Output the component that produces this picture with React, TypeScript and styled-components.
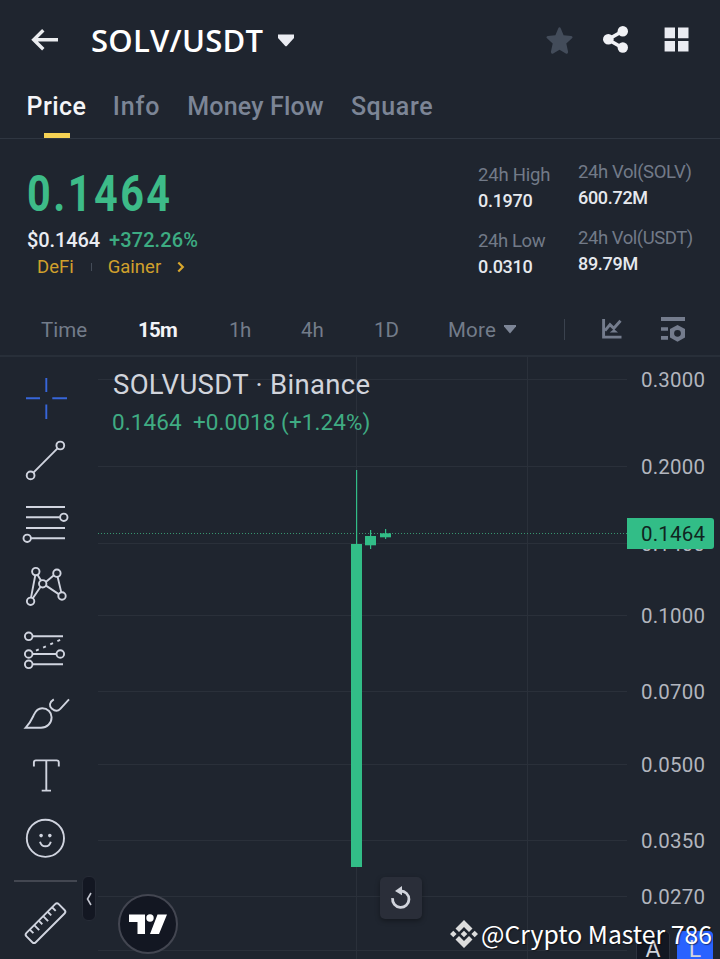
import React from "react";
import styled, { createGlobalStyle } from "styled-components";

const Global = createGlobalStyle`
  * { box-sizing: border-box; }
  html, body { margin: 0; background: #1f252f; }
  body { overflow: hidden; }
`;

const Screen = styled.main`
  width: 720px;
  height: 959px;
  overflow: hidden;
  position: relative;
  display: flex;
  flex-direction: column;
  background: #1f252f;
  color: #eaecef;
  font-family: Roboto, sans-serif;
`;

const Header = styled.header`
  height: 80px;
  flex: none;
  display: flex;
  align-items: center;
  padding: 0 25px 0 31px;
  svg { display: block; flex: none; }
`;

const Pair = styled.h1`
  margin: 0 14px 0 32px;
  width: 173px;
  white-space: nowrap;
  font: 600 31px/40px "Open Sans", sans-serif;
  letter-spacing: 0.25px;
  color: #fff;
`;

const HeaderActions = styled.div`
  margin-left: auto;
  display: flex;
  align-items: center;
  gap: 30px;
`;

const Tabs = styled.nav`
  height: 59px;
  flex: none;
  display: flex;
  gap: 27px;
  padding-left: 27px;
  border-bottom: 1px solid #2f3641;
`;

const Tab = styled.div<{ $active?: boolean; $w: number; $ls: number }>`
  width: ${(p) => p.$w}px;
  height: 58px;
  display: flex;
  flex-direction: column;
  align-items: center;
  justify-content: space-between;
  padding-top: 11px;
  white-space: nowrap;
  font-size: 25px;
  line-height: 32px;
  font-weight: 500;
  letter-spacing: ${(p) => p.$ls}px;
  color: ${(p) => (p.$active ? "#f4f5f8" : "#7c8596")};
  &::after {
    content: "";
    width: 26px;
    height: 5px;
    background: ${(p) => (p.$active ? "#f6d254" : "transparent")};
  }
`;

const Summary = styled.section`
  height: 164px;
  flex: none;
  display: flex;
  padding-left: 27px;
`;

const PriceBlock = styled.div`
  width: 451px;
  padding-top: 30px;
`;

const BigPrice = styled.div`
  height: 50px;
  width: 170px;
  font-size: 49.5px;
  line-height: 50px;
  font-weight: 700;
  letter-spacing: 3px;
  color: #3dbb88;
  transform: scaleX(0.835);
  transform-origin: 0 0;
  white-space: nowrap;
`;

const SubPrice = styled.div`
  display: flex;
  gap: 9px;
  margin-top: 9px;
  font-size: 20px;
  line-height: 24px;
  font-weight: 500;
  white-space: nowrap;
`;

const Fiat = styled.span`
  width: 73px;
  color: #eaecf2;
  letter-spacing: -0.1px;
`;

const Change = styled.span`
  color: #3dac82;
  letter-spacing: 0.1px;
`;

const Tags = styled.div`
  display: flex;
  align-items: center;
  padding-left: 10px;
  margin-top: 3px;
  font-size: 18.5px;
  line-height: 24px;
  color: #d0a02c;
  svg { margin-left: 16px; }
`;

const TagSplit = styled.i`
  width: 1px;
  height: 8px;
  margin: 0 16px 0 17px;
  background: #444c58;
`;

const Stats = styled.div<{ $w: number; $top: number }>`
  width: ${(p) => p.$w}px;
  padding-top: ${(p) => p.$top}px;
  display: flex;
  flex-direction: column;
  gap: 14px;
`;

const Stat = styled.div`
  height: 52px;
  white-space: nowrap;
`;

const StatLabel = styled.div<{ $ls: number }>`
  font-size: 18.5px;
  line-height: 26px;
  letter-spacing: ${(p) => p.$ls}px;
  color: #727a88;
`;

const StatValue = styled.div`
  font-size: 18px;
  line-height: 26px;
  font-weight: 500;
  letter-spacing: -0.3px;
  color: #e6e9ee;
`;

const Intervals = styled.div`
  height: 54px;
  flex: none;
  display: flex;
  align-items: center;
  padding: 0 0 0 41px;
  border-bottom: 2px solid #282f39;
  svg { display: block; flex: none; }
`;

const Interval = styled.span<{ $active?: boolean; $w: number; $ls?: number }>`
  width: ${(p) => p.$w}px;
  flex: none;
  white-space: nowrap;
  font-size: 20.5px;
  line-height: 26px;
  padding-top: 1px;
  letter-spacing: ${(p) => p.$ls ?? 0}px;
  font-weight: ${(p) => (p.$active ? 700 : 400)};
  color: ${(p) => (p.$active ? "#f3f4f7" : "#737c8a")};
`;

const BarSplit = styled.i`
  width: 1px;
  height: 21px;
  margin: 0 37px 0 48px;
  background: #3a424e;
`;

const ChartArea = styled.section`
  flex: 1;
  display: flex;
  min-height: 0;
  position: relative;
`;

const Toolbar = styled.aside`
  width: 98px;
  flex: none;
  padding-top: 9px;
  display: flex;
  flex-direction: column;
`;

const Tool = styled.div<{ $accent?: boolean }>`
  height: 63px;
  flex: none;
  padding-left: 22px;
  display: flex;
  align-items: center;
  svg {
    display: block;
    overflow: visible;
    fill: none;
    stroke: ${(p) => (p.$accent ? "#3766d9" : "#d0d4df")};
    stroke-width: 1.9;
  }
`;

const ToolSplit = styled.i`
  width: 63px;
  height: 2px;
  margin: 10px 0 9px 14px;
  flex: none;
  background: #434751;
`;

const Canvas = styled.svg`
  display: block;
  width: 622px;
  height: 602px;
  flex: none;
  font-family: Roboto, sans-serif;
`;

const Legend = styled.div`
  position: absolute;
  left: 113px;
  top: 11px;
  white-space: nowrap;
`;

const LegendTitle = styled.div`
  font-size: 27.5px;
  line-height: 34px;
  letter-spacing: 0.3px;
  color: #d1d4dc;
`;

const LegendValue = styled.div`
  margin: 5px 0 0 -1px;
  font-size: 22.5px;
  line-height: 30px;
  letter-spacing: 0.08px;
  color: #3fac83;
  white-space: pre;
`;

const Handle = styled.div`
  position: absolute;
  left: 82px;
  top: 519px;
  width: 14px;
  height: 45px;
  border-radius: 6px;
  border: 1px solid #262b36;
  background: #131722;
  display: grid;
  place-items: center;
`;

const Logo = styled.div`
  position: absolute;
  left: 118px;
  top: 537px;
  width: 60px;
  height: 60px;
  border-radius: 50%;
  border: 2px solid #434651;
  background: #131722;
  display: grid;
  place-items: center;
`;

const Reset = styled.div`
  position: absolute;
  left: 380px;
  top: 520px;
  width: 42px;
  height: 42px;
  border-radius: 5px;
  background: #2a2e39;
  box-shadow: 0 2px 5px rgba(0, 0, 0, 0.35);
  display: grid;
  place-items: center;
`;

const ScaleButton = styled.div<{ $on?: boolean; $left: number; $w: number }>`
  position: absolute;
  left: ${(p) => p.$left}px;
  top: 574px;
  width: ${(p) => p.$w}px;
  height: 40px;
  border-radius: 4px;
  border: 1px solid ${(p) => (p.$on ? "#2962ff" : "#2d323e")};
  background: ${(p) => (p.$on ? "#2962ff" : "#131722")};
  color: #d1d4dc;
  text-align: center;
  font-size: 23px;
  line-height: 36px;
`;

const Watermark = styled.div`
  position: absolute;
  left: 450px;
  bottom: 7px;
  display: flex;
  align-items: center;
  gap: 3px;
  white-space: nowrap;
  font: 400 24.75px/36px "Noto Sans CJK SC", sans-serif;
  color: #fff;
  text-shadow: 1px 1px 1px rgba(0, 0, 0, 0.5);
  svg { display: block; }
`;

const WatermarkText = styled.span`
  padding-bottom: 2px;
  line-height: 34px;
`;

const gridRows = [379.5, 466.5, 543.5, 615.5, 691.5, 764.5, 840.5, 896.5, 950.5];
const axis: [number, string][] = [
  [379.5, "0.3000"],
  [466.5, "0.2000"],
  [543.5, "0.1400"],
  [615.5, "0.1000"],
  [691.5, "0.0700"],
  [764.5, "0.0500"],
  [840.5, "0.0350"],
  [896.5, "0.0270"],
];
const candles = [
  { x: 351, top: 544, bottom: 867, high: 470, low: 867 },
  { x: 365, top: 536, bottom: 545.3, high: 530, low: 549 },
  { x: 380, top: 533.3, bottom: 537.3, high: 529, low: 539 },
];

const Icon = ({ children }: { children: React.ReactNode }) => (
  <svg width="48" height="48" viewBox="-24 -24 48 48">{children}</svg>
);

function ToolIcons() {
  return (
    <Toolbar>
      <Tool $accent>
        <Icon><path d="M.3-20V-6M.3 6.5V21M-20 .3H-6M6.3.3H21" /></Icon>
      </Tool>
      <Tool>
        <Icon>
          <circle cx="14.3" cy="-15.5" r="3.9" /><circle cx="-15.4" cy="14.4" r="3.9" />
          <path d="M11.5-12.7-12.6 11.6" />
        </Icon>
      </Tool>
      <Tool>
        <Icon>
          <path d="M-20-17H19M-20-6.7H13.8M-20 4H19M-15 14.3H19" />
          <circle cx="17.8" cy="-6.7" r="3.7" /><circle cx="-18.8" cy="14.3" r="3.7" />
        </Icon>
      </Tool>
      <Tool>
        <Icon>
          <circle cx="-10.2" cy="-15.4" r="3.7" /><circle cx="10.9" cy="-13.8" r="3.7" />
          <circle cx="-3.3" cy="-3.2" r="3.7" /><circle cx="-15.4" cy="14.3" r="3.7" />
          <circle cx="16" cy="9" r="3.7" />
          <path d="M-10.7-11.7-15 10.6M-8.4-12.1-5-6.4M-5.4-.2-13.2 11.3M-.2-5.1 7.8-11.7M11.6-10.1 15.3 5.4M0-1.4 12.7 7.1" />
        </Icon>
      </Tool>
      <Tool>
        <Icon>
          <path d="M-13.3-13.7H17M-13.3 4H10.4M-13.3 14.3H17" />
          <circle cx="-17.3" cy="-13.7" r="3.8" /><circle cx="-17.3" cy="4" r="3.8" />
          <circle cx="14.3" cy="4" r="3.8" /><circle cx="-17.3" cy="14.3" r="3.8" />
          <path d="M-10 .7 15-10.4" strokeDasharray="3 4.8" />
        </Icon>
      </Tool>
      <Tool>
        <Icon>
          <path d="M-20.3 14.7C-15.7 10-14 5.8-12.3 2.2-10.2-2.4-7.5-4.7-3.8-4.7 1.8-4.7 5.6-.6 5.6 4.2 5.6 10.2 1 14.7-5 14.7Z" />
          <path d="M7.8-13.6C3.2-10.8 2.8-7 6-4.2 9.2-1.4 12-1.7 14.3-4.2L23-13.6" />
        </Icon>
      </Tool>
      <Tool>
        <Icon><path d="M-12.1-9.6V-13.5Q-12.1-15.6-10-15.6H10.6Q12.8-15.6 12.8-13.5V-9.6M.3-15.6V14.6M-4.3 14.6H5" /></Icon>
      </Tool>
      <Tool>
        <Icon>
          <circle cx="-.6" cy="-.7" r="18.6" />
          <path d="M-6 2.7C-4.3 8.8 3.2 8.8 4.8 2.7" />
          <g fill="#d0d4df" stroke="none"><circle cx="-4.9" cy="-3.4" r="1.8" /><circle cx="3.8" cy="-3.4" r="1.8" /></g>
        </Icon>
      </Tool>
      <ToolSplit />
      <Tool>
        <Icon>
          <g transform="translate(-.5 .2) rotate(-45)">
            <rect x="-22.8" y="-6.6" width="45.6" height="13.2" rx="2.5" />
            <path d="M-15.6-6.6V-1.5M-9.3-6.6V.4M-3-6.6V-1.5M3.3-6.6V.4M9.6-6.6V-1.5M15.9-6.6V-1.5" />
          </g>
        </Icon>
      </Tool>
    </Toolbar>
  );
}

function PriceChart() {
  return (
    <Canvas viewBox="98 357 622 602">
      <g stroke="#2a303a" strokeWidth="1">
        {gridRows.map((y) => <line key={y} x1="98" x2="627" y1={y} y2={y} />)}
        <line x1="356.5" x2="356.5" y1="357" y2="959" />
        <line x1="527.5" x2="527.5" y1="357" y2="959" />
      </g>
      <line x1="98" x2="627" y1="533.5" y2="533.5" stroke="#37966f" strokeDasharray="1 2" />
      {candles.map((c) => (
        <g key={c.x} fill="#32bd87">
          <rect x={c.x + 5} y={c.high} width="1.2" height={c.low - c.high} />
          <rect x={c.x} y={c.top} width="11" height={c.bottom - c.top} />
        </g>
      ))}
      <g fill="#b2b5be" fontSize="20.5">
        {axis.map(([y, label]) => (
          <text key={label} x="641" y={y + 7.5} textLength="64">{label}</text>
        ))}
      </g>
      <path d="M627 518H711Q714 518 714 521V546Q714 549 711 549H627Z" fill="#32bd87" />
      <text x="641" y="541" fontSize="20.5" textLength="64" fill="#10251f">0.1464</text>
    </Canvas>
  );
}

export default function App() {
  return (
    <Screen>
      <Global />
      <Header>
        <svg width="28" height="24" viewBox="0 0 28 24" fill="none" stroke="#eaecef" strokeWidth="3.4">
          <path d="M12.3 2.3 2.7 11.8 12.3 21.3M3 11.8H27" />
        </svg>
        <Pair>SOLV/USDT</Pair>
        <svg width="16" height="13" viewBox="0 0 16 13" fill="#eaecf2">
          <path d="M0 .5H16V4L9 11.8Q8 12.8 7 11.8L0 4Z" />
        </svg>
        <HeaderActions>
          <svg width="27" height="27" viewBox="0 0 27 27" fill="#434c5a">
            <path d="M13.5.2Q14.3.2 14.8 1.5L17.6 8.2 25.2 9Q27.4 9.6 26 11.3L20.3 16.4 22.1 24.8Q22.1 27.4 19.8 26.5L13.5 22.8 7.2 26.5Q4.9 27.4 4.9 24.8L6.7 16.4 1 11.3Q-.4 9.6 1.8 9L9.4 8.2 12.2 1.5Q12.7.2 13.5.2Z" />
          </svg>
          <svg width="26" height="28" viewBox="1 .5 26 28" fill="#f0f1f5">
            <path d="M20 6 6 14 20 22" fill="none" stroke="#f0f1f5" strokeWidth="3.7" />
            <circle cx="6.3" cy="13.8" r="5.3" /><circle cx="20.8" cy="5.8" r="5.2" /><circle cx="20.8" cy="22" r="5.2" />
          </svg>
          <svg width="36" height="26" viewBox="0 0 36 26" fill="#eaecf2">
            <path d="M5.6 .6H16V11.2H5.6ZM19 .6H29.5V11.2H19ZM5.6 14.1H16V24.6H5.6ZM19 14.1H29.5V24.6H19Z" />
          </svg>
        </HeaderActions>
      </Header>
      <Tabs>
        <Tab $active $w={59} $ls={0.45}>Price</Tab>
        <Tab $w={47} $ls={0.9}>Info</Tab>
        <Tab $w={137} $ls={0.2}>Money Flow</Tab>
        <Tab $w={82} $ls={0.6}>Square</Tab>
      </Tabs>
      <Summary>
        <PriceBlock>
          <BigPrice>0.1464</BigPrice>
          <SubPrice><Fiat>$0.1464</Fiat><Change>+372.26%</Change></SubPrice>
          <Tags>
            DeFi<TagSplit />Gainer
            <svg width="8" height="12" viewBox="0 0 8 12" fill="none" stroke="#d9a82e" strokeWidth="2.2">
              <path d="M1.3 1.5 5.8 6 1.3 10.5" />
            </svg>
          </Tags>
        </PriceBlock>
        <Stats $w={100} $top={23}>
          <Stat><StatLabel $ls={-0.2}>24h High</StatLabel><StatValue>0.1970</StatValue></Stat>
          <Stat><StatLabel $ls={-0.4}>24h Low</StatLabel><StatValue>0.0310</StatValue></Stat>
        </Stats>
        <Stats $w={130} $top={20}>
          <Stat><StatLabel $ls={-0.4}>24h Vol(SOLV)</StatLabel><StatValue>600.72M</StatValue></Stat>
          <Stat><StatLabel $ls={-0.45}>24h Vol(USDT)</StatLabel><StatValue>89.79M</StatValue></Stat>
        </Stats>
      </Summary>
      <Intervals>
        <Interval $w={97}>Time</Interval>
        <Interval $w={91} $active $ls={-0.7}>15m</Interval>
        <Interval $w={72} $ls={-0.4}>1h</Interval>
        <Interval $w={73}>4h</Interval>
        <Interval $w={74}>1D</Interval>
        <Interval $w={56} $ls={0.2}>More</Interval>
        <svg width="12" height="9" viewBox="0 0 12 9" fill="#7c8596"><path d="M0 0H12V1.5L6 8.5 0 1.5Z" /></svg>
        <BarSplit />
        <svg width="20" height="20" viewBox="0 0 20 20" fill="none" stroke="#747c8d" strokeWidth="2.9">
          <path d="M1.6 0V18.1H19.5M3 11.6 8 5.6 11.8 9.3 18.5 1.8" />
          <path d="M7.7 13.5H16L12 10Z" fill="#747c8d" stroke="none" />
        </svg>
        <svg width="65" height="26" viewBox="0 0 65 26" fill="#747c8d">
          <path d="M39 1H63V5H39ZM39 11.2H46V14.8H39ZM39 20H46V23.8H39Z" />
          <path fillRule="evenodd" d="M55.5 9 63 13V21.5L55.5 25.7 48 21.5V13ZM55.5 13.9A3.4 3.4 0 1 0 55.5 20.7 3.4 3.4 0 1 0 55.5 13.9Z" />
        </svg>
      </Intervals>
      <ChartArea>
        <ToolIcons />
        <PriceChart />
        <Legend>
          <LegendTitle>SOLVUSDT · Binance</LegendTitle>
          <LegendValue>{"0.1464  +0.0018 (+1.24%)"}</LegendValue>
        </Legend>
        <Handle>
          <svg width="6" height="14" viewBox="0 0 6 14" fill="none" stroke="#c3c6d0" strokeWidth="1.6"><path d="M5 1 1.5 7 5 13" /></svg>
        </Handle>
        <Logo>
          <svg width="38" height="20" viewBox="0 0 38 20" fill="#fff">
            <path d="M0 .5H16V20H8.5V8H0ZM28.5.5H38L30 20H21Z" /><circle cx="21" cy="4" r="3.7" />
          </svg>
        </Logo>
        <Reset>
          <svg width="22" height="24" viewBox="0 0 22 24" fill="none" stroke="#d1d4dc" strokeWidth="2.8">
            <path d="M2.6 12.2A8.2 8.2 0 1 0 10.5 5" />
            <path d="M12 0V9.2L5 5Z" fill="#d1d4dc" stroke="none" />
          </svg>
        </Reset>
        <ScaleButton $left={636} $w={34}>A</ScaleButton>
        <ScaleButton $left={677} $w={36} $on>L</ScaleButton>
      </ChartArea>
      <Watermark>
        <svg width="28" height="28" viewBox="0 0 28 28" fill="#dcdcdc">
          <path d="M14 0 22.5 8.5 19 12 14 7 9 12 5.5 8.5ZM14 28 5.5 19.5 9 16 14 21 19 16 22.5 19.5ZM14 10.7 17.3 14 14 17.3 10.7 14ZM3.3 10.7 6.6 14 3.3 17.3 0 14ZM24.7 10.7 28 14 24.7 17.3 21.4 14Z" />
        </svg>
        <WatermarkText>@Crypto Master 786</WatermarkText>
      </Watermark>
    </Screen>
  );
}
